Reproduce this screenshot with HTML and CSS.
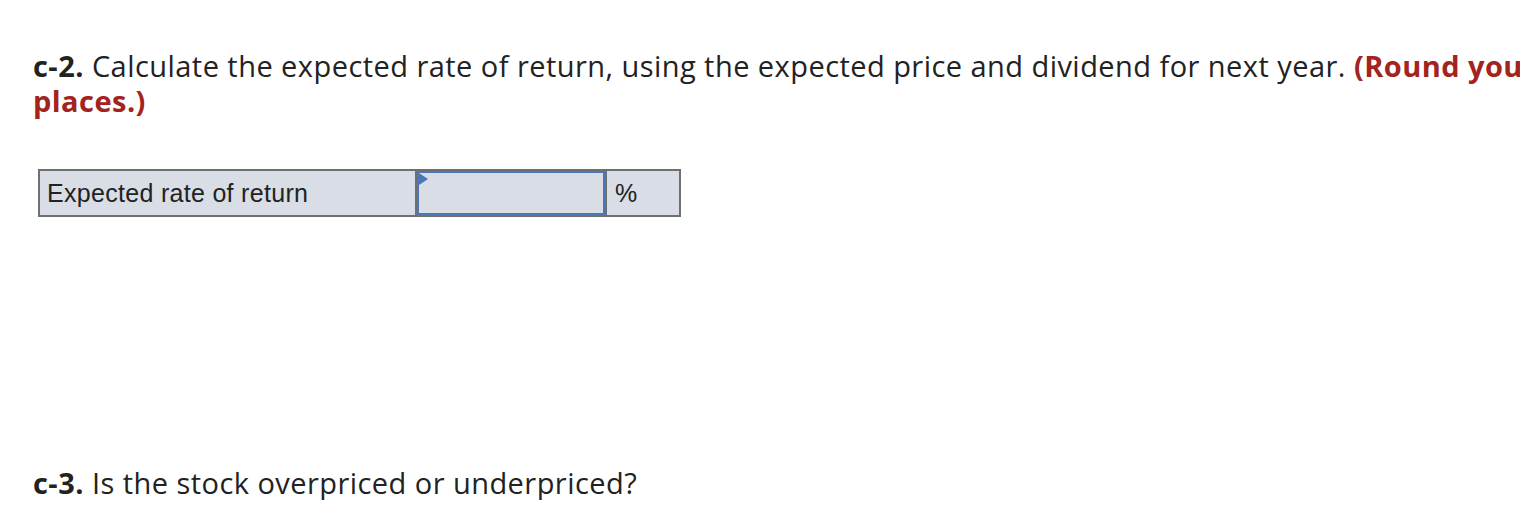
FILE: index.html
```html
<!DOCTYPE html>
<html>
<head>
<meta charset="utf-8">
<link rel="stylesheet" href="styles.css">
</head>
<body>
<div class="page">
  <p class="question"><b>c-2.</b> Calculate the expected rate of return, using the expected price and dividend for next year. <b class="note">(Round your answer to 2 decimal places.)</b></p>
  <div class="answer-table">
    <div class="cell label">Expected rate of return</div>
    <div class="cell input"><span class="flag"></span></div>
    <div class="cell unit">%</div>
  </div>
  <p class="question q3"><b>c-3.</b> Is the stock overpriced or underpriced?</p>
</div>
</body>
</html>
```
FILE: styles.css
```css
html, body {
  margin: 0;
  padding: 0;
  background: #fff;
  overflow: hidden;
}
* {
  box-sizing: border-box;
}
.page {
  width: 1900px;
  padding: 48px 0 0 33px;
}
.question {
  margin: 0;
  font-family: "Open Sans", "Liberation Sans", sans-serif;
  font-size: 29px;
  letter-spacing: 0.45px;
  line-height: 35px;
  color: #222;
  width: 1860px;
}
.question b {
  font-weight: 700;
}
.note {
  color: #a3231e;
}
.answer-table {
  margin: 51px 0 0 5px;
  display: flex;
  width: 643px;
  height: 48px;
  border: 2px solid #707070;
  background: #d9dde6;
  font-family: "Liberation Sans", Arial, sans-serif;
  font-size: 25px;
  letter-spacing: 0.3px;
  color: #222;
}
.cell {
  display: flex;
  align-items: center;
}
.label {
  width: 377px;
  padding-left: 7px;
  border-right: 2px solid #707070;
}
.input {
  position: relative;
  width: 188px;
  border: 2px solid #4a77b9;
}
.flag {
  position: absolute;
  left: 0;
  top: 0;
  width: 0;
  height: 0;
  border-top: 6px solid transparent;
  border-bottom: 6px solid transparent;
  border-left: 9px solid #4a77b9;
}
.unit {
  flex: 1;
  padding-left: 8px;
  border-left: 2px solid #707070;
}
.q3 {
  margin-top: 248px;
}
```
